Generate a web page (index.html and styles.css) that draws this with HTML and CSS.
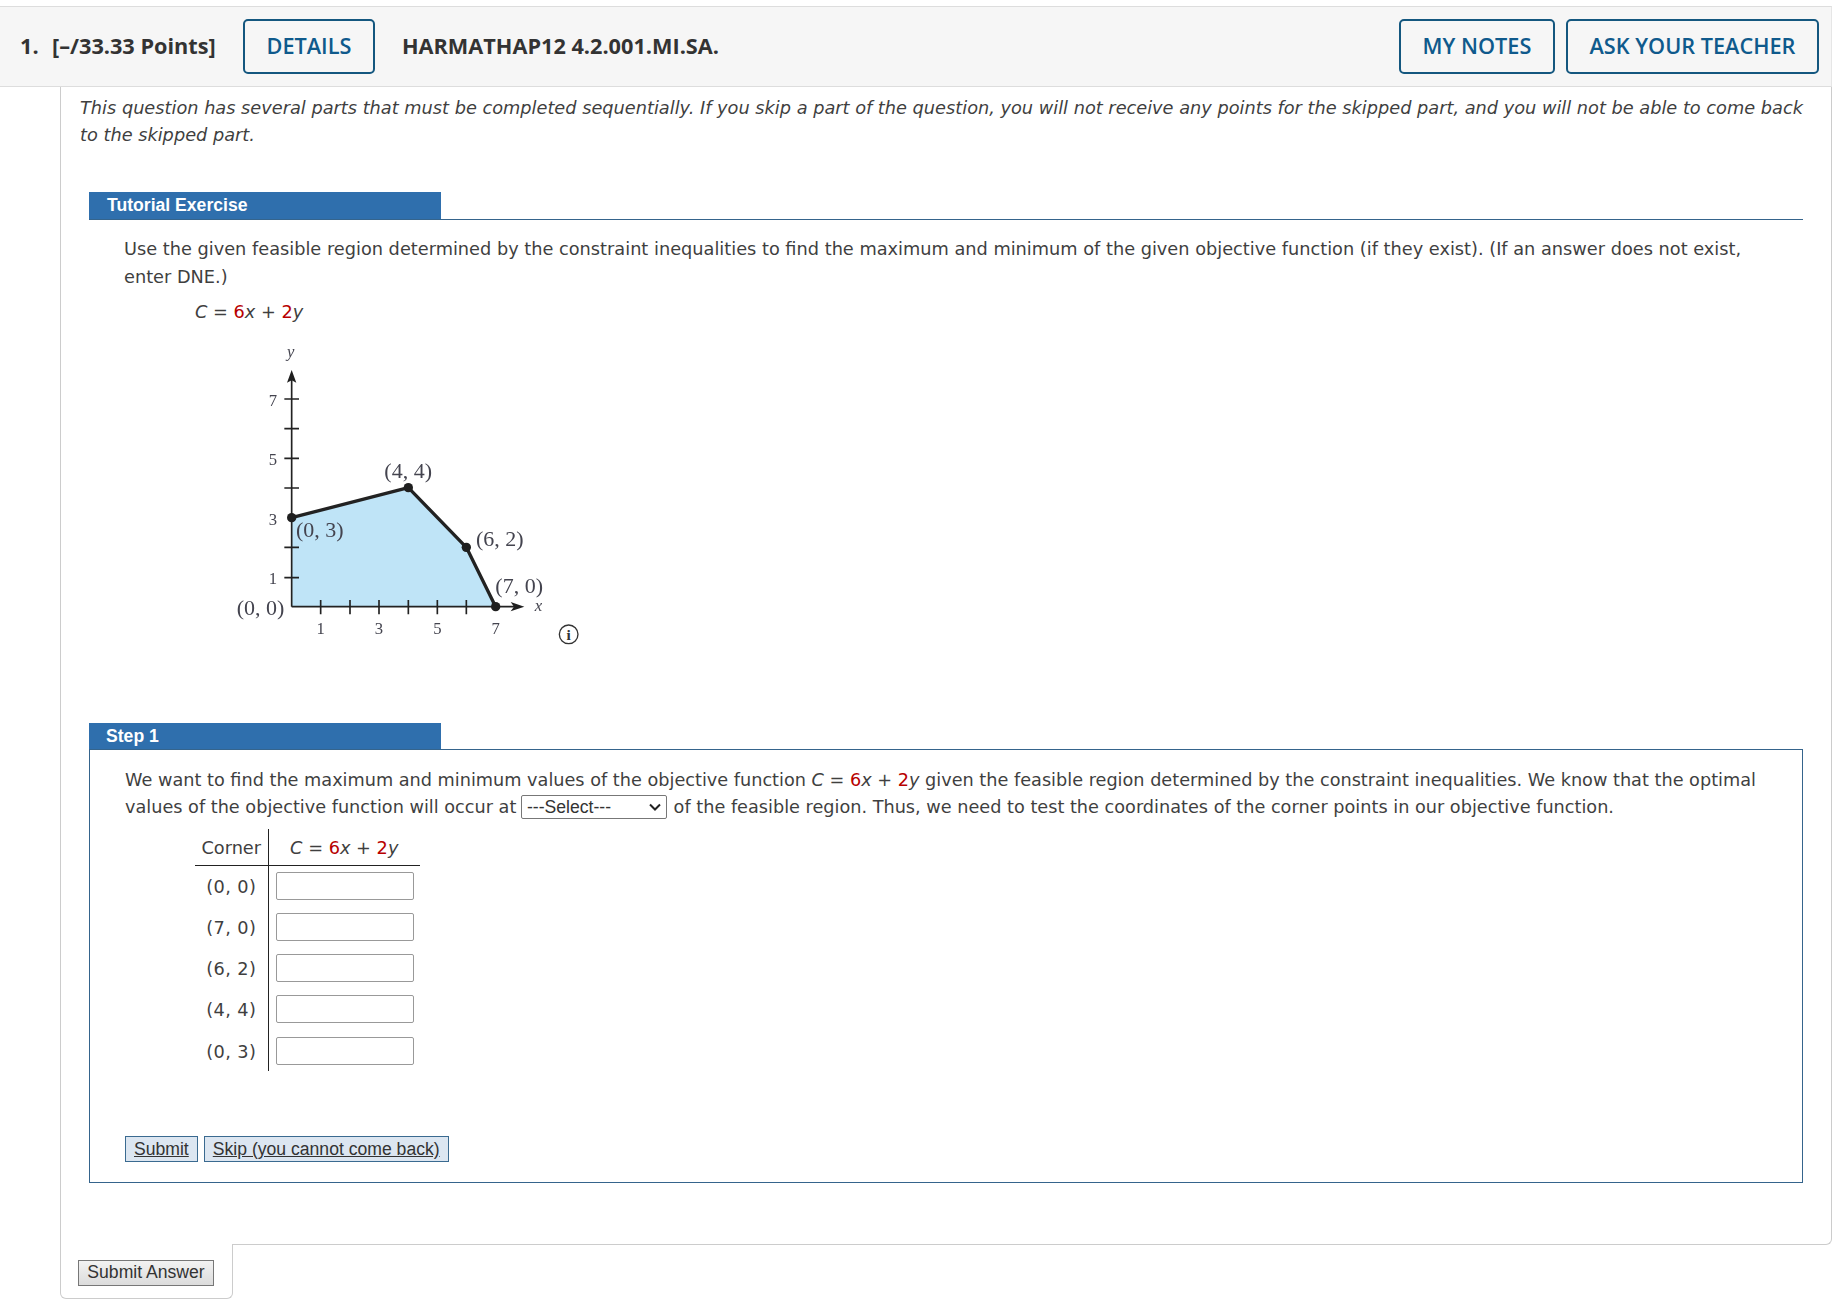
FILE: index.html
```html
<!DOCTYPE html>
<html lang="en">
<head>
<meta charset="utf-8">
<title>Question 1</title>
<link rel="stylesheet" href="styles.css">
</head>
<body>
<div class="page">
  <header class="qhead">
    <span class="qnum">1.</span>
    <span class="qpoints">[–/33.33 Points]</span>
    <a class="hbtn details">DETAILS</a>
    <span class="qcode">HARMATHAP12 4.2.001.MI.SA.</span>
    <span class="spacer"></span>
    <a class="hbtn notes">MY NOTES</a>
    <a class="hbtn ask">ASK YOUR TEACHER</a>
  </header>
  <main class="panel">
    <p class="notice">This question has several parts that must be completed sequentially. If you skip a part of the question, you will not receive any points for the skipped part, and you will not be able to come back to the skipped part.</p>

    <section class="tutorial">
      <h2 class="bar">Tutorial Exercise</h2>
      <div class="tutorial-body">
        <p class="copy copy-tall">Use the given feasible region determined by the constraint inequalities to find the maximum and minimum of the given objective function (if they exist). (If an answer does not exist, enter DNE.)</p>
        <p class="formula"><i>C</i> = <span class="red">6</span><i>x</i> + <span class="red">2</span><i>y</i></p>
      </div>
      <svg class="graph" viewBox="0 0 1260 1020" role="img" aria-label="Feasible region">
        <g class="art">
          <polygon class="region" points="275,830 275,563 625,473 799,652 887,830"/>
          <g class="thin">
            <path d="M275 830V140M275 830H945"/>
            <path d="M253 207H297M253 296H297M253 385H297M253 474H297M253 652H297M253 743H297"/>
            <path d="M362 810V853M450 810V853M537 810V853M625 810V853M712 810V853M799 810V853"/>
          </g>
          <polygon class="ink" points="275,120 261,158 275,151 289,158"/>
          <polygon class="ink" points="973,830 932,816 942,830 932,844"/>
          <polyline class="edge" points="275,563 625,473 799,652 887,830"/>
          <circle class="ink" cx="275" cy="563" r="14"/>
          <circle class="ink" cx="625" cy="473" r="14"/>
          <circle class="ink" cx="799" cy="652" r="14"/>
          <circle class="ink" cx="887" cy="830" r="14"/>
          <g class="lbl">
            <text x="553" y="445">(4, 4)</text>
            <text x="288" y="620">(0, 3)</text>
            <text x="828" y="648">(6, 2)</text>
            <text x="886" y="788">(7, 0)</text>
            <text x="110" y="855">(0, 0)</text>
          </g>
          <g class="num">
            <text x="219" y="229">7</text>
            <text x="219" y="405">5</text>
            <text x="219" y="584">3</text>
            <text x="219" y="763">1</text>
            <text x="362" y="913">1</text>
            <text x="537" y="913">3</text>
            <text x="712" y="913">5</text>
            <text x="887" y="913">7</text>
            <text class="var" x="272" y="82">y</text>
            <text class="var" x="1015" y="843">x</text>
          </g>
        </g>
        <circle class="info-ring" cx="1106" cy="913" r="28"/>
        <text class="info-i" x="1106" y="930">i</text>
      </svg>
    </section>

    <section class="step">
      <h2 class="bar bar-step">Step 1</h2>
      <div class="step-box">
        <p class="copy">We want to find the maximum and minimum values of the objective function <i>C</i> = <span class="red">6</span><i>x</i> + <span class="red">2</span><i>y</i> given the feasible region determined by the constraint inequalities. We know that the optimal values of the objective function will occur at <select class="pick"><option>---Select---</option></select> of the feasible region. Thus, we need to test the coordinates of the corner points in our objective function.</p>
        <table class="corners">
          <thead>
            <tr><th class="c1">Corner</th><th class="c2"><i>C</i> = <span class="red">6</span><i>x</i> + <span class="red">2</span><i>y</i></th></tr>
          </thead>
          <tbody>
            <tr><td class="c1">(0, 0)</td><td class="c2"><input class="cell" type="text"></td></tr>
            <tr><td class="c1">(7, 0)</td><td class="c2"><input class="cell" type="text"></td></tr>
            <tr><td class="c1">(6, 2)</td><td class="c2"><input class="cell" type="text"></td></tr>
            <tr><td class="c1">(4, 4)</td><td class="c2"><input class="cell" type="text"></td></tr>
            <tr><td class="c1">(0, 3)</td><td class="c2"><input class="cell" type="text"></td></tr>
          </tbody>
        </table>
        <div class="actions">
          <a class="act">Submit</a>
          <a class="act">Skip (you cannot come back)</a>
        </div>
      </div>
    </section>
  </main>
  <div class="tab"><button class="answer" type="button">Submit Answer</button></div>
</div>
</body>
</html>
```
FILE: styles.css
```css
* { box-sizing: border-box; }
html, body { margin: 0; padding: 0; background: #fff; }
body { font-family: "DejaVu Sans", Verdana, sans-serif; font-size: 17.74px; color: #3f3f3f; }
.page { width: 1834px; padding-top: 6px; }
p { margin: 0; }

.qhead {
  display: flex; align-items: center; height: 81px; width: 1832px;
  padding: 0 12px 1px 20px;
  background: #f6f6f6;
  border-top: 1px solid #ddd; border-bottom: 1px solid #ddd; border-right: 1px solid #e6e6e6;
  font-family: "Open Sans", sans-serif; font-weight: 600; font-size: 21.7px; color: #333;
}
.qnum, .qpoints, .qcode { font-weight: 700; padding-bottom: 2px; }
.qnum { width: 32px; }
.qpoints { width: 191px; white-space: nowrap; }
.hbtn {
  display: flex; align-items: center; justify-content: center;
  height: 55px; padding: 0 0 2px;
  border: 2px solid #14577f; border-radius: 5px;
  color: #0f5a8c; white-space: nowrap;
}
.details { width: 132px; }
.qcode { margin-left: 27px; white-space: nowrap; }
.spacer { flex: 1; }
.notes { width: 156px; margin-right: 11px; }
.ask { width: 253px; }

.panel {
  margin: 0 2px 0 60px; height: 1158px; padding: 0 28px 0 28px;
  border-left: 1px solid #ccc; border-right: 1px solid #ccc; border-bottom: 1px solid #ccc;
  border-bottom-right-radius: 6px;
  overflow: hidden;
}
.notice { font-style: italic; line-height: 27px; margin: 8px -4px 43px -9px; }
.bar {
  width: 352px; height: 28px; margin: 0; padding-left: 18px;
  background: #2f6fad; color: #fff;
  font: bold 17.6px/27px "Liberation Sans", Arial, sans-serif;
}
.bar-step { height: 27px; padding-left: 17px; line-height: 26px; }
.tutorial-body { border-top: 1px solid #35648c; margin-top: -1px; padding: 15px 40px 0 35px; }
.copy { line-height: 27px; }
.copy-tall { line-height: 28px; }
.step-box .copy { margin-right: -8px; font-size: 17.68px; }
.formula { line-height: 27px; margin: 8px 0 0 71px; }
.red { color: #b80000; }
.graph { display: block; width: 420px; height: 340px; margin: 4px 0 53px 111px; }
.art { filter: blur(0.35px); }
.region { fill: #bfe4f7; }
.thin path { fill: none; stroke: #222; stroke-width: 5; }
.ink { fill: #1f1f1f; }
.edge { fill: none; stroke: #222; stroke-width: 10; stroke-linejoin: round; }
.lbl text { font: 66px "Liberation Serif", serif; fill: #44444f; }
.num text { font: 50px "Liberation Serif", serif; fill: #44444f; text-anchor: middle; }
.num .var { font-style: italic; }
.info-ring { fill: #fff; stroke: #333; stroke-width: 4; }
.info-i { font: bold 46px "Liberation Serif", serif; fill: #333; text-anchor: middle; }

.step-box { border: 1px solid #35648c; height: 434px; margin-top: -1px; padding: 17px 30px 0 35px; }
.pick {
  appearance: none;
  width: 146px; height: 24px; vertical-align: 0; margin: 0 1px 0 -1px;
  font: 17.6px "Liberation Sans", Arial, sans-serif; color: #333;
  background: #fff url("data:image/svg+xml,%3Csvg xmlns='http://www.w3.org/2000/svg' width='12' height='8'%3E%3Cpath d='M1 1.5L6 6.5L11 1.5' fill='none' stroke='%23222' stroke-width='2'/%3E%3C/svg%3E") no-repeat right 5px center;
  border: 1px solid #777; border-radius: 2px; padding: 0 0 0 5px;
}
.corners { border-collapse: collapse; margin: 8px 0 65px 70px; }
.corners th { height: 36px; font-weight: normal; border-bottom: 1px solid #222; padding: 2px 0 0; }
.corners td { height: 41.25px; padding: 0; text-align: center; }
.corners td.c1 { letter-spacing: 0.4px; padding-top: 2px; }
.c1 { width: 73px; border-right: 1px solid #222; }
.c2 { width: 152px; }
.corners td.c2 { text-align: left; padding-left: 7px; }
.cell { display: block; width: 138px; height: 28px; border: 1px solid #999; border-radius: 2px; background: #fff; padding: 0; }
.actions { display: flex; gap: 6px; }
.act {
  height: 26px; padding: 0 8px;
  background: #dce6f1; border: 1px solid #3a6a90; color: #333;
  font: 17.6px/24px "Liberation Sans", Arial, sans-serif;
  text-decoration: underline; white-space: nowrap;
}
.tab {
  width: 173px; height: 55px; margin: -1px 0 0 60px; padding: 16px 0 0 17px;
  background: #fff;
  border-left: 1px solid #ccc; border-right: 1px solid #ccc; border-bottom: 1px solid #ccc;
  border-radius: 0 0 6px 6px;
}
.answer {
  display: block; width: 136px; height: 26px; padding: 0 0 2px;
  background: linear-gradient(#f2f2f2, #dcdcdc);
  border: 1px solid #777; color: #333;
  font: 17.6px/22px "Liberation Sans", Arial, sans-serif;
}
```
